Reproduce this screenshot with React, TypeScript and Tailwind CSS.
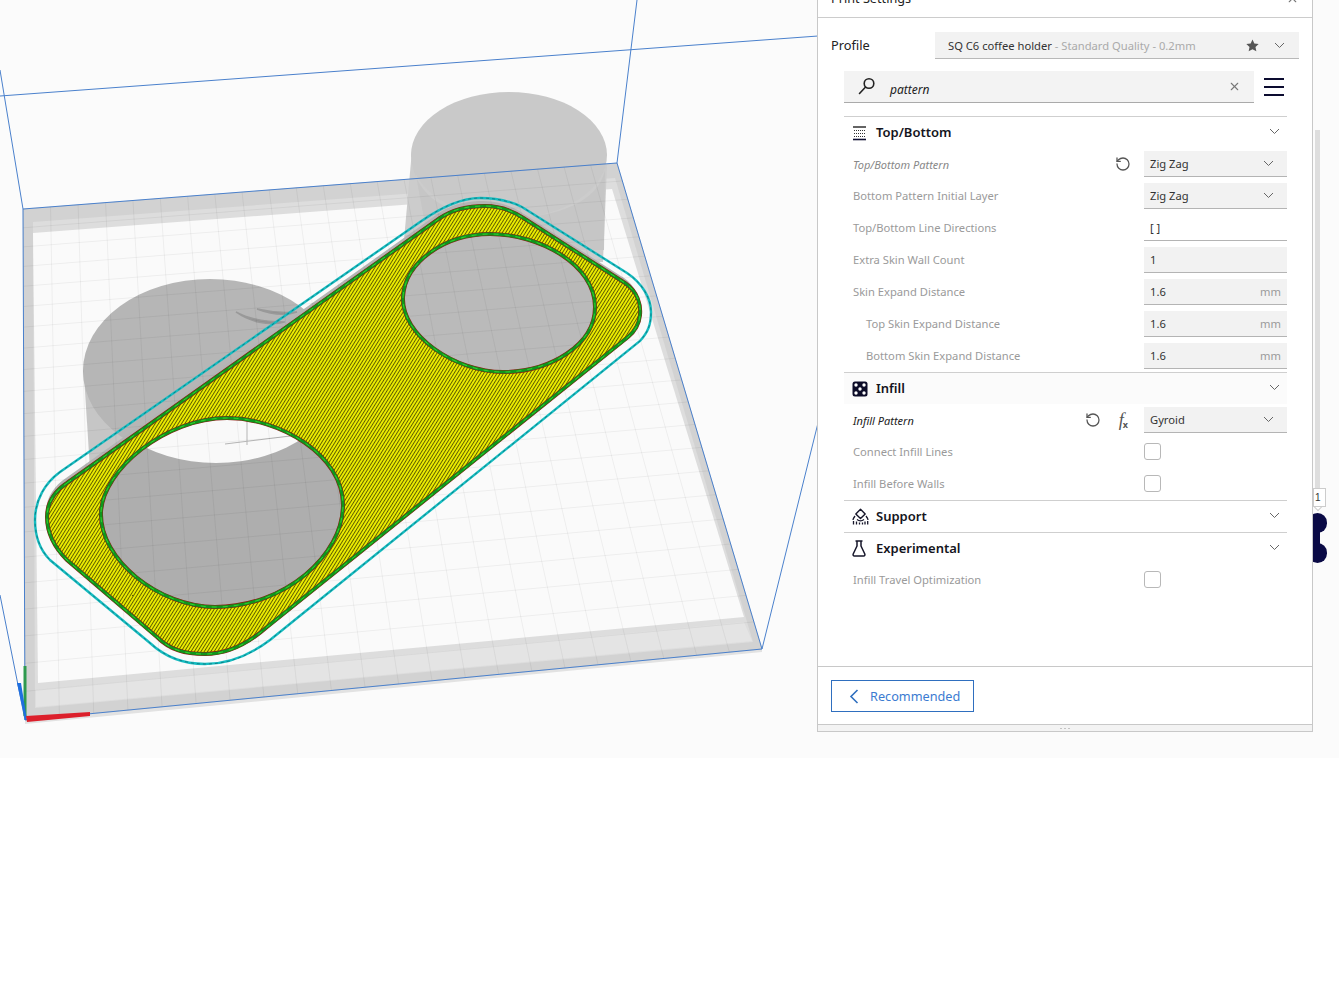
import React from "react";
import { RotateCcw, X } from "lucide-react";

// Perspective map of the build plate (unit square to the four screen corners)
const Q = [[23, 209], [617, 163], [762, 649], [25, 720]];
function homography() {
  const [[x0, y0], [x1, y1], [x2, y2], [x3, y3]] = Q;
  const dx1 = x1 - x2, dx2 = x3 - x2, dx3 = x0 - x1 + x2 - x3;
  const dy1 = y1 - y2, dy2 = y3 - y2, dy3 = y0 - y1 + y2 - y3;
  const det = dx1 * dy2 - dx2 * dy1;
  const g = (dx3 * dy2 - dx2 * dy3) / det;
  const h = (dx1 * dy3 - dx3 * dy1) / det;
  return (u: number, v: number) => {
    const w = g * u + h * v + 1;
    return [
      ((x1 - x0 + g * x1) * u + (x3 - x0 + h * x3) * v + x0) / w,
      ((y1 - y0 + g * y1) * u + (y3 - y0 + h * y3) * v + y0) / w,
    ];
  };
}
const P = homography();
const gridLines: number[][] = [];
for (let i = 0; i <= 22; i++) {
  const t = i / 22;
  gridLines.push([...P(t, 0), ...P(t, 1)]);
  gridLines.push([...P(0, t), ...P(1, t)]);
}

const PLATE =
  "M67,483 L440,218 C455,208 470,206 485,206 C500,206 515,212 525,219 L625,283 C638,292 641,305 640,315 C639,325 634,332 628,337 L267,627 C250,642 230,654 205,654 C185,654 170,650 157,637 L67,560 C52,545 47,530 47,517 C47,503 55,491 67,483 Z";
const HOLE_A =
  "M101,512 C103,470 165,418 227,418 C280,418 343,455 343,505 C343,555 285,607 215,607 C160,607 99,560 101,512 Z";
const HOLE_B =
  "M403,297 C405,262 445,234 490,234 C540,234 595,265 595,307 C595,345 550,372 503,372 C455,372 401,335 403,297 Z";
const SKIRT =
  "M60,472 L420,222 C440,208 460,198 480,198 C495,198 510,201 522,207 L627,273 C642,283 651,298 651,312 C651,325 648,332 640,341 L270,640 C250,655 230,664 205,664 C185,664 165,657 150,643 L50,560 C40,550 35,535 35,520 C35,500 45,483 60,472 Z";

function Scene() {
  const walls = [PLATE, HOLE_A, HOLE_B];
  return (
    <svg className="absolute top-0 left-0" width="1339" height="758" viewBox="0 0 1339 758">
      <defs>
        <pattern id="infill" width="2.8" height="2.8" patternUnits="userSpaceOnUse" patternTransform="rotate(32)">
          <rect width="2.8" height="2.8" fill="#ecec00" />
          <rect width="0.95" height="2.8" fill="#5d5d00" />
        </pattern>
        <clipPath id="holeA"><path d={HOLE_A} /></clipPath>
      </defs>

      {/* build plate */}
      <polygon points="25,724 762,652 762,649 25,720" fill="#e2e2e2" />
      <polygon points="23,209 617,163 762,649 25,720" fill="#d2d2d2" />
      <polygon points="33,222 615,178 753,642 35,708" fill="#dddddd" />
      <polygon points="36,707 752,641 744,622 36,690" fill="#e4e4e4" />
      <polygon points="33,233 612,189 744,617 38,683" fill="#fafafa" />

      {/* ghost of the layers above */}
      <path d="M412,150 L404,240 L404,262 L603,262 L607,165 Z" fill="#cccccc" />
      <path d="M412,155 C412,190 440,218 505,218 C570,218 600,195 605,170 L604,250 L430,250 Z" fill="#c6c6c6" />
      <ellipse cx="509" cy="155" rx="98" ry="63" fill="#c9c9c9" />
      <path d="M84,375 L90,470 L200,470 L300,360 Z" fill="#c6c6c6" />
      <ellipse cx="210" cy="371" rx="127" ry="92" fill="#b6b6b6" />
      <path d="M236,312 C250,322 268,326 285,322 C270,322 250,320 236,312 Z M257,309 C270,314 285,316 297,312 C285,313 270,312 257,309 Z" fill="#8f8f8f" stroke="#999999" strokeWidth="1.5" />

      {/* shadow of the plate */}
      <path d={PLATE} transform="translate(-1,-5)" fill="#b4b4b4" />

      {/* holes */}
      <path d={HOLE_A} fill="#aeaeae" />
      <g clipPath="url(#holeA)">
        <ellipse cx="216" cy="371" rx="127" ry="92" fill="#f9f9f9" />
        <path d="M225,444 L290,436 M247,420 L247,445" stroke="#b5b5b5" strokeWidth="1" />
      </g>
      <path d={HOLE_B} fill="#bababa" />

      {/* grid */}
      {gridLines.map((l, i) => (
        <line key={i} x1={l[0]} y1={l[1]} x2={l[2]} y2={l[3]} stroke="#000000" strokeOpacity="0.05" strokeWidth="1" />
      ))}

      {/* skirt */}
      <path d={SKIRT} fill="none" stroke="#16bcc0" strokeWidth="2.4" />
      <path d={SKIRT} fill="none" stroke="#0b7a82" strokeWidth="0.9" strokeDasharray="3 3" />

      {/* sliced layer */}
      <path d={`${PLATE} ${HOLE_A} ${HOLE_B}`} fillRule="evenodd" fill="url(#infill)" />
      {walls.map((d) => (
        <g key={d} fill="none">
          <path d={d} stroke="#8c1a10" strokeWidth="4" />
          <path d={d} stroke="#0f951c" strokeWidth="3" />
          <path d={d} stroke="#35d02c" strokeWidth="1" strokeDasharray="5 6" />
        </g>
      ))}

      {/* build volume */}
      <g stroke="#4a80cc" strokeWidth="1" fill="none">
        <line x1="0" y1="96" x2="818" y2="36" />
        <line x1="0" y1="70" x2="23" y2="209" />
        <line x1="617" y1="163" x2="637" y2="0" />
        <line x1="762" y1="649" x2="818" y2="423" />
        <line x1="0" y1="595" x2="25" y2="720" />
        <polyline points="23,209 617,163 762,649 25,720 23,209" />
      </g>

      {/* axes */}
      <line x1="25" y1="666" x2="25" y2="716" stroke="#2e9a4f" strokeWidth="3" />
      <polygon points="17,683 21,683 27,720 25,720" fill="#1f6fe0" />
      <polygon points="26,716 90,712 90,716 27,722" fill="#dc1f2b" />
    </svg>
  );
}

function Chevron({ className = "" }: { className?: string }) {
  return (
    <svg className={className} width="11" height="7" viewBox="0 0 11 7" fill="none">
      <path d="M1 1 L5.5 5.5 L10 1" stroke="#666666" strokeWidth="1" />
    </svg>
  );
}

function TopBottomIcon() {
  return (
    <svg width="15" height="16" viewBox="0 0 15 16" fill="none">
      <path d="M1 2 H14" stroke="#222" strokeWidth="1.4" />
      <path d="M2 5.5 H13 M2 8.5 H13 M2 11.5 H13" stroke="#333" strokeWidth="1" strokeDasharray="1 1" />
      <path d="M1 14.5 H14" stroke="#111133" strokeWidth="1.6" />
    </svg>
  );
}
function InfillIcon() {
  return (
    <svg width="16" height="16" viewBox="0 0 16 16">
      <rect x="0.5" y="0.5" width="15" height="15" rx="2.5" fill="#0c0c28" />
      <g fill="#ffffff">
        <circle cx="4" cy="4" r="1.7" />
        <circle cx="12" cy="4" r="1.7" />
        <circle cx="8" cy="8" r="1.7" />
        <circle cx="4" cy="12" r="1.7" />
        <circle cx="12" cy="12" r="1.7" />
      </g>
    </svg>
  );
}
function SupportIcon() {
  return (
    <svg width="17" height="17" viewBox="0 0 17 17" fill="none" stroke="#16162a">
      <path d="M8.5 1.2 L13.2 5.9 L8.5 10.6 L3.8 5.9 Z" strokeWidth="1.4" strokeLinejoin="round" />
      <path d="M3 8 C1.5 10 1 11 1 12 M14 8 C15.5 10 16 11 16 12 M5 11.5 C7 13 10 13 12 11.5" strokeWidth="1.3" />
      <path d="M1.5 13 V16.5 M4.5 13.5 V16.5 M7.5 14.5 V16.5 M10.5 14.5 V16.5 M13 13.5 V16.5 M15.7 13 V16.5" strokeWidth="1.3" />
    </svg>
  );
}
function FlaskIcon() {
  return (
    <svg width="14" height="17" viewBox="0 0 14 17" fill="none" stroke="#16162a" strokeWidth="1.5">
      <path d="M3.5 1 H10.5" />
      <path d="M5 1 V6 L1.2 14 C0.8 15 1.3 16 2.4 16 H11.6 C12.7 16 13.2 15 12.8 14 L9 6 V1" strokeLinejoin="round" />
    </svg>
  );
}

function Head({ icon, title }: { icon: React.ReactNode; title: string }) {
  return (
    <div className="h-8 border-t border-[#cfcfcf] flex items-center pl-[9px] pr-[6px]">
      <div className="w-[23px] flex items-center -ml-[1px] shrink-0">{icon}</div>
      <span className="text-[13px] font-semibold text-[#141420] leading-none flex-1 pl-[1px]">{title}</span>
      <Chevron className="mr-[1px] mb-[2px]" />
    </div>
  );
}

function Field({ value, unit, plain }: { value: string; unit?: string; plain?: boolean }) {
  return (
    <div className={`w-[143px] h-[26px] border-b border-[#b4b4b4] flex items-center pl-[6px] pr-[6px] pt-[2px] text-[11.2px] text-[#333333] ${plain ? "" : "bg-[#f2f2f2]"}`}>
      <span className="flex-1">{value}</span>
      {unit && <span className="text-[#9a9a9a]">{unit}</span>}
    </div>
  );
}
function Select({ value }: { value: string }) {
  return (
    <div className="w-[143px] h-[26px] bg-[#f2f2f2] border-b border-[#b4b4b4] flex items-center pl-[6px] pr-[13px] text-[11.2px] text-[#333333]">
      <span className="flex-1 pt-[2px]">{value}</span>
      <Chevron />
    </div>
  );
}
function Check() {
  return <div className="w-[17px] h-[17px] rounded-[3px] border border-[#b8b8b8] bg-white mb-[1px]" />;
}

function Row({
  label,
  children,
  indent,
  labelClass = "text-[11.2px] text-[#9a9a9a]",
  actions,
}: {
  label: string;
  children: React.ReactNode;
  indent?: boolean;
  labelClass?: string;
  actions?: React.ReactNode;
}) {
  return (
    <div className={`h-8 flex items-center ${indent ? "pl-[22px]" : "pl-[9px]"}`}>
      <span className={`flex-1 leading-none ${labelClass}`}>{label}</span>
      {actions}
      <div className="w-[143px] flex">{children}</div>
    </div>
  );
}

function Reset() {
  return <RotateCcw size={16} strokeWidth={1.9} color="#555555" />;
}
function Fx() {
  return (
    <span className="flex items-end leading-none text-[#555555]">
      <span className="text-[18px] italic font-['Liberation_Serif',serif] leading-none">f</span>
      <span className="text-[9px] font-bold leading-none -ml-[1px]">x</span>
    </span>
  );
}

function Panel() {
  return (
    <div className="absolute left-[817px] top-[-20px] w-[496px] h-[752px] bg-white border-x border-b border-[#c8c8c8] flex flex-col font-['Noto_Sans',sans-serif]">
      <div className="h-[38px] shrink-0 border-b border-[#cccccc] flex items-center pl-[13px] pr-[13px]">
        <span className="flex-1 text-[12.7px] text-[#222222]">Print Settings</span>
        <X size={13} color="#777777" />
      </div>

      <div className="mt-[14px] h-[27px] shrink-0 flex items-center pl-[13px] pr-[13px]">
        <span className="w-[104px] text-[12.8px] text-[#222222]">Profile</span>
        <div className="flex-1 h-[27px] bg-[#f2f2f2] border-b border-[#b8b8b8] flex items-center pl-[13px] pr-[14px] text-[11.2px]">
          <span className="flex-1 whitespace-nowrap text-[#333333] pt-[2px]">
            SQ C6 coffee holder<span className="text-[#aaaaaa]"> - Standard Quality - 0.2mm</span>
          </span>
          <svg width="13" height="13" viewBox="0 0 24 24" className="mr-[15px]">
            <path d="M12 1 L15.4 8.4 L23.4 9.3 L17.5 14.8 L19.1 22.8 L12 18.8 L4.9 22.8 L6.5 14.8 L0.6 9.3 L8.6 8.4 Z" fill="#555555" />
          </svg>
          <Chevron />
        </div>
      </div>

      <div className="mt-[12px] ml-[26px] mr-[28px] h-[32px] shrink-0 flex items-center">
        <div className="w-[410px] h-[32px] bg-[#f3f3f3] border-b border-[#aaaaaa] flex items-center pl-[14px] pr-[13px]">
          <svg width="18" height="18" viewBox="0 0 18 18" fill="none" stroke="#222222" strokeWidth="1.6" className="mb-[2px]">
            <circle cx="11" cy="6.5" r="4.8" />
            <path d="M7.6 10 L1.5 16.5" strokeLinecap="round" />
          </svg>
          <span className="flex-1 pl-[14px] pt-[6px] text-[12px] italic text-[#222222]">pattern</span>
          <X size={13} color="#777777" />
        </div>
        <div className="ml-[10px] w-[20px] flex flex-col gap-[5.5px]">
          <div className="h-[2.5px] bg-[#0c0c30]" />
          <div className="h-[2.5px] bg-[#0c0c30]" />
          <div className="h-[2.5px] bg-[#0c0c30]" />
        </div>
      </div>

      <div className="mt-[13px] ml-[26px] w-[443px] shrink-0 flex flex-col">
        <Head icon={<TopBottomIcon />} title="Top/Bottom" />
        <Row label="Top/Bottom Pattern" labelClass="text-[11px] italic text-[#888888]" actions={<span className="mr-[13px] flex"><Reset /></span>}>
          <Select value="Zig Zag" />
        </Row>
        <Row label="Bottom Pattern Initial Layer"><Select value="Zig Zag" /></Row>
        <Row label="Top/Bottom Line Directions"><Field value="[ ]" plain /></Row>
        <Row label="Extra Skin Wall Count"><Field value="1" /></Row>
        <Row label="Skin Expand Distance"><Field value="1.6" unit="mm" /></Row>
        <Row label="Top Skin Expand Distance" indent><Field value="1.6" unit="mm" /></Row>
        <Row label="Bottom Skin Expand Distance" indent><Field value="1.6" unit="mm" /></Row>
        <div className="bg-[#fbfbfb]"><Head icon={<InfillIcon />} title="Infill" /></div>
        <Row
          label="Infill Pattern"
          labelClass="text-[11px] italic text-[#222222]"
          actions={
            <span className="flex items-center mr-[16px] gap-[18px]">
              <Reset />
              <Fx />
            </span>
          }
        >
          <Select value="Gyroid" />
        </Row>
        <Row label="Connect Infill Lines"><Check /></Row>
        <Row label="Infill Before Walls"><Check /></Row>
        <Head icon={<SupportIcon />} title="Support" />
        <Head icon={<FlaskIcon />} title="Experimental" />
        <Row label="Infill Travel Optimization"><Check /></Row>
      </div>

      <div className="flex-1" />

      <div className="h-[58px] shrink-0 border-t border-[#c8c8c8] pl-[13px] pt-[13px]">
        <div className="w-[143px] h-[32px] border border-[#2f6fbf] flex items-center pl-[17px] pt-[1px] text-[12.7px] text-[#3b7bd1]">
          <svg width="10" height="15" viewBox="0 0 10 15" fill="none" className="mr-[11px]">
            <path d="M8.5 1 L2 7.5 L8.5 14" stroke="#2f6fbf" strokeWidth="1.6" />
          </svg>
          Recommended
        </div>
      </div>
      <div className="h-[7px] shrink-0 border-t border-[#c8c8c8] bg-[#f3f3f3] flex items-center justify-center gap-[2px]">
        <div className="w-[2px] h-[1px] bg-[#c4c4c4]" />
        <div className="w-[2px] h-[1px] bg-[#c4c4c4]" />
        <div className="w-[2px] h-[1px] bg-[#c4c4c4]" />
      </div>
    </div>
  );
}

function LayerSlider() {
  return (
    <>
      <div className="absolute left-[1315px] top-[130px] w-[5px] h-[360px] bg-[#dedede]" />
      <div className="absolute left-[1308px] top-[513px] w-[19px] h-[20px] rounded-full bg-[#0a0a45]" />
      <div className="absolute left-[1308px] top-[543px] w-[19px] h-[20px] rounded-full bg-[#0a0a45]" />
      <div className="absolute left-[1313px] top-[530px] w-[7px] h-[16px] bg-[#0a0a45]" />
      <div className="absolute left-[1315px] top-[504px] w-[6px] h-[6px] rotate-45 bg-white border-r border-b border-[#cccccc]" />
      <div className="absolute left-[1313px] top-[488px] w-[13px] h-[19px] bg-white border border-[#cccccc] flex items-center pl-[1px] text-[10px] text-[#333333] font-['Liberation_Sans',sans-serif]">
        1
      </div>
    </>
  );
}

export default function App() {
  return (
    <div className="w-[1339px] h-[1008px] bg-white overflow-hidden">
      <div className="relative w-full h-[758px] bg-[#fbfbfb] overflow-hidden">
        <Scene />
        <LayerSlider />
        <Panel />
      </div>
    </div>
  );
}
